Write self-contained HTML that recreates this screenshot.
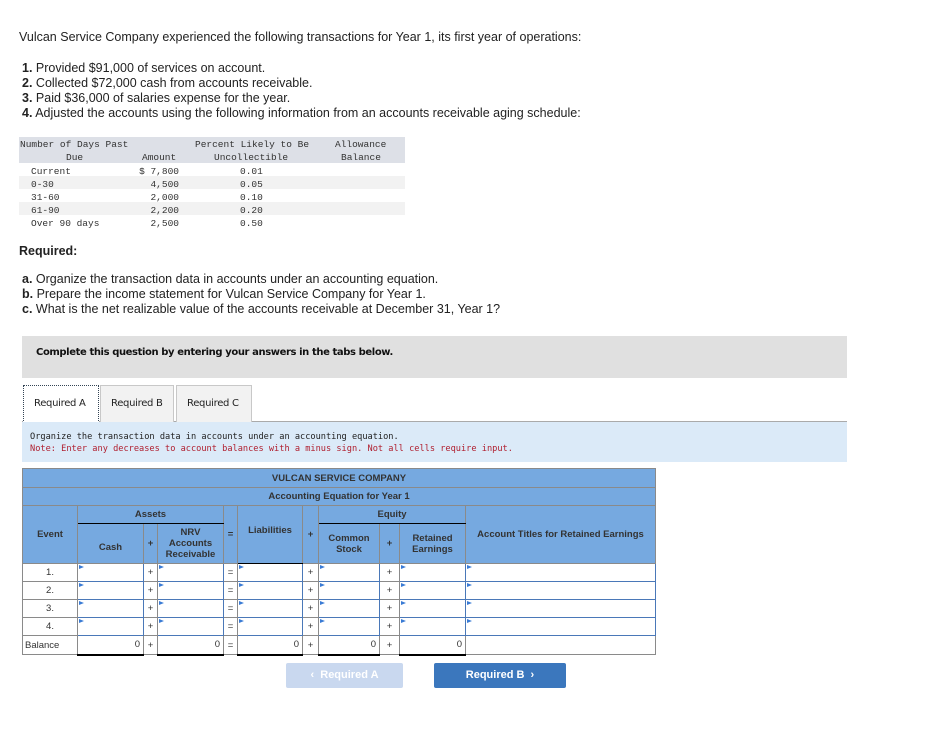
<!DOCTYPE html>
<html><head><style>
body{margin:0;width:938px;height:729px;background:#fff;font-family:"Liberation Sans",sans-serif;color:#222;position:relative;overflow:hidden}
.a{position:absolute;white-space:nowrap}
.t{font-size:12.5px}
.mono{font-family:"Liberation Mono",monospace;font-size:9.5px;color:#333}
table.eq{position:absolute;left:22px;top:468px;border-collapse:collapse;table-layout:fixed;font-family:"Liberation Sans",sans-serif;font-size:9.5px;font-weight:bold;color:#333}
table.eq td{border:1px solid #8a8a8a;padding:0;text-align:center;overflow:hidden}
.bl{background:#76a9e0}
.in{background:#fff;border:1px solid #4a78b8 !important;position:relative}
.in:before{content:"";position:absolute;left:1px;top:1px;border-left:5px solid #3a7bd5;border-top:2px solid transparent;border-bottom:2px solid transparent}
.op{background:#fff;font-weight:normal}
.ev{background:#fff;font-weight:normal}
</style></head><body>
<div class="a t" style="left:19px;top:30px">Vulcan Service Company experienced the following transactions for Year 1, its first year of operations:</div>
<div class="a t" style="left:22px;top:61px"><b>1.</b> Provided $91,000 of services on account.</div>
<div class="a t" style="left:22px;top:76px"><b>2.</b> Collected $72,000 cash from accounts receivable.</div>
<div class="a t" style="left:22px;top:91px"><b>3.</b> Paid $36,000 of salaries expense for the year.</div>
<div class="a t" style="left:22px;top:106px"><b>4.</b> Adjusted the accounts using the following information from an accounts receivable aging schedule:</div>

<div class="a" style="left:19px;top:137px;width:386px;height:26px;background:#dde0e7"></div>
<div class="a" style="left:19px;top:176px;width:386px;height:13px;background:#f2f2f2"></div>
<div class="a" style="left:19px;top:202px;width:386px;height:13px;background:#f2f2f2"></div>
<div class="a mono" style="left:20px;top:139px">Number of Days Past</div>
<div class="a mono" style="left:66px;top:152px">Due</div>
<div class="a mono" style="left:142px;top:152px">Amount</div>
<div class="a mono" style="left:195px;top:139px">Percent Likely to Be</div>
<div class="a mono" style="left:214px;top:152px">Uncollectible</div>
<div class="a mono" style="left:335px;top:139px">Allowance</div>
<div class="a mono" style="left:341px;top:152px">Balance</div>
<div class="a mono" style="left:31px;top:165px;line-height:13px">Current<br>0-30<br>31-60<br>61-90<br>Over 90 days</div>
<div class="a mono" style="left:134px;top:165px;line-height:13px;text-align:right;width:45px">$ 7,800<br>4,500<br>2,000<br>2,200<br>2,500</div>
<div class="a mono" style="left:240px;top:165px;line-height:13px">0.01<br>0.05<br>0.10<br>0.20<br>0.50</div>

<div class="a t" style="left:19px;top:244px;font-weight:bold">Required:</div>
<div class="a t" style="left:22px;top:272px"><b>a.</b> Organize the transaction data in accounts under an accounting equation.</div>
<div class="a t" style="left:22px;top:287px"><b>b.</b> Prepare the income statement for Vulcan Service Company for Year 1.</div>
<div class="a t" style="left:22px;top:302px"><b>c.</b> What is the net realizable value of the accounts receivable at December 31, Year 1?</div>

<div class="a" style="left:22px;top:336px;width:825px;height:42px;background:#e0e0e0"></div>
<div class="a" style="left:36px;top:347px;font-size:10px;font-weight:bold;color:#111;font-family:'DejaVu Sans',sans-serif;letter-spacing:-0.4px">Complete this question by entering your answers in the tabs below.</div>

<div class="a" style="left:22px;top:421px;width:825px;height:1px;background:#aaa"></div>
<div class="a" style="left:23px;top:385px;width:74px;height:37px;background:#fff;border:1px dotted #345;border-bottom:none"></div>
<div class="a" style="left:100px;top:385px;width:72px;height:36px;background:#f2f2f2;border:1px solid #c8c8c8"></div>
<div class="a" style="left:176px;top:385px;width:74px;height:36px;background:#f2f2f2;border:1px solid #c8c8c8"></div>
<div class="a" style="left:34px;top:398px;font-size:10px;font-family:'DejaVu Sans',sans-serif;letter-spacing:-0.3px">Required A</div>
<div class="a" style="left:111px;top:398px;font-size:10px;font-family:'DejaVu Sans',sans-serif;letter-spacing:-0.3px">Required B</div>
<div class="a" style="left:187px;top:398px;font-size:10px;font-family:'DejaVu Sans',sans-serif;letter-spacing:-0.3px">Required C</div>

<div class="a" style="left:22px;top:422px;width:825px;height:40px;background:#dbeaf8"></div>
<div class="a" style="left:30px;top:432px;font-family:'DejaVu Sans Mono',monospace;font-size:8.65px;color:#222">Organize the transaction data in accounts under an accounting equation.</div>
<div class="a" style="left:30px;top:444px;font-family:'DejaVu Sans Mono',monospace;font-size:8.65px;color:#b02030">Note: Enter any decreases to account balances with a minus sign. Not all cells require input.</div>

<table class="eq">
<colgroup><col style="width:55px"><col style="width:66px"><col style="width:14px"><col style="width:66px"><col style="width:14px"><col style="width:65px"><col style="width:16px"><col style="width:61px"><col style="width:20px"><col style="width:66px"><col style="width:190px"></colgroup>
<tr style="height:19px"><td class="bl" colspan="11">VULCAN SERVICE COMPANY</td></tr>
<tr style="height:18px"><td class="bl" colspan="11">Accounting Equation for Year 1</td></tr>
<tr style="height:18px"><td class="bl" rowspan="2">Event</td><td class="bl" colspan="3" style="border-bottom:1px solid #000">Assets</td><td class="bl" rowspan="2">=</td><td class="bl" rowspan="2" style="padding-bottom:8px;border-bottom:1px solid #000">Liabilities</td><td class="bl" rowspan="2">+</td><td class="bl" colspan="3" style="border-bottom:1px solid #000">Equity</td><td class="bl" rowspan="2">Account Titles for Retained Earnings</td></tr>
<tr style="height:40px"><td class="bl" style="padding-top:8px">Cash</td><td class="bl">+</td><td class="bl">NRV<br>Accounts<br>Receivable</td><td class="bl">Common<br>Stock</td><td class="bl">+</td><td class="bl">Retained<br>Earnings</td></tr>
<tr style="height:18px"><td class="ev">1.</td><td class="in"></td><td class="op">+</td><td class="in"></td><td class="op">=</td><td class="in"></td><td class="op">+</td><td class="in"></td><td class="op">+</td><td class="in"></td><td class="in"></td></tr>
<tr style="height:18px"><td class="ev">2.</td><td class="in"></td><td class="op">+</td><td class="in"></td><td class="op">=</td><td class="in"></td><td class="op">+</td><td class="in"></td><td class="op">+</td><td class="in"></td><td class="in"></td></tr>
<tr style="height:18px"><td class="ev">3.</td><td class="in"></td><td class="op">+</td><td class="in"></td><td class="op">=</td><td class="in"></td><td class="op">+</td><td class="in"></td><td class="op">+</td><td class="in"></td><td class="in"></td></tr>
<tr style="height:18px"><td class="ev">4.</td><td class="in"></td><td class="op">+</td><td class="in"></td><td class="op">=</td><td class="in"></td><td class="op">+</td><td class="in"></td><td class="op">+</td><td class="in"></td><td class="in"></td></tr>
<tr style="height:19px;font-weight:normal"><td class="ev" style="text-align:left;padding-left:2px">Balance</td><td class="op" style="text-align:right;padding-right:3px;border-bottom:2px solid #000">0</td><td class="op">+</td><td class="op" style="text-align:right;padding-right:3px;border-bottom:2px solid #000">0</td><td class="op">=</td><td class="op" style="text-align:right;padding-right:3px;border-bottom:2px solid #000">0</td><td class="op">+</td><td class="op" style="text-align:right;padding-right:3px;border-bottom:2px solid #000">0</td><td class="op">+</td><td class="op" style="text-align:right;padding-right:3px;border-bottom:2px solid #000">0</td><td class="op"></td></tr>
</table>

<div class="a" style="left:286px;top:663px;width:117px;height:25px;background:#c9d8ef;border-radius:2px;color:#fff;font-size:11px;font-weight:bold;text-align:center;line-height:25px">&lsaquo;&nbsp; Required A</div>
<div class="a" style="left:434px;top:663px;width:132px;height:25px;background:#3b77bd;border-radius:2px;color:#fff;font-size:11px;font-weight:bold;text-align:center;line-height:25px">Required B &nbsp;&rsaquo;</div>
</body></html>
